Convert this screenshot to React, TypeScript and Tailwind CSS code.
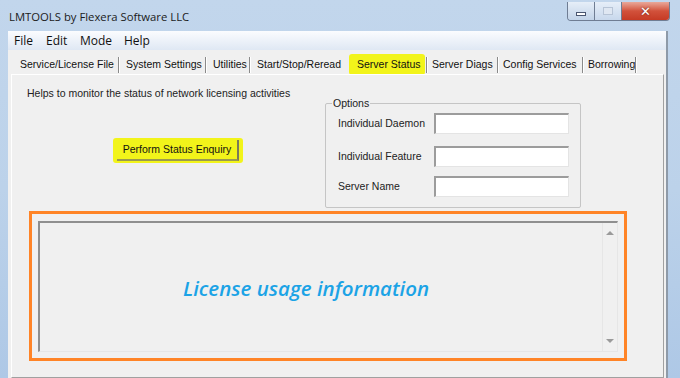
import React from 'react';

const ui = { fontFamily: '"Liberation Sans", Arial, sans-serif' };
const seg = { fontFamily: '"Open Sans", "Noto Sans", sans-serif' };

const tabs = [
  { label: 'Service/License File', w: 'w-[106px]', sep: true },
  { label: 'System Settings', w: 'w-[87px]', sep: true },
  { label: 'Utilities', w: 'w-[44px]', sep: true },
  { label: 'Start/Stop/Reread', w: 'w-[98px]', sep: false },
];
const tabsRight = [
  { label: 'Server Diags', w: 'w-[71px]' },
  { label: 'Config Services', w: 'w-[85px]' },
  { label: 'Borrowing', w: 'w-[52px]' },
];

const Sep = () => (
  <div className="ml-auto flex h-[16px] shrink-0">
    <div className="w-px bg-[#8a8a8a]" />
    <div className="w-px bg-white" />
  </div>
);

const Field = ({ label, mt }: { label: string; mt: string }) => (
  <div className={`flex items-center ${mt}`}>
    <span className="w-[108px] pl-[12px] whitespace-nowrap text-[10.5px] text-[#222]">{label}</span>
    <div className="w-[135px] h-[21px] bg-white border-t-2 border-l-2 border-t-[#9c9c9c] border-l-[#9c9c9c] border-r border-b border-r-[#e4e4e4] border-b-[#e4e4e4]" />
  </div>
);

export default function App() {
  return (
    <div className="w-[680px] h-[378px] overflow-hidden flex flex-col bg-gradient-to-b from-[#c2d6ec] via-[#bcd2ea] to-[#aec8e6]" style={ui}>
      {/* title bar */}
      <div className="h-[31px] flex items-start shrink-0">
        <span className="pl-[9px] pt-[9px] text-[11.3px] text-[#1b1b1b] whitespace-nowrap" style={seg}>LMTOOLS by Flexera Software LLC</span>
        <div className="ml-auto mr-[10px] mt-[2px] flex h-[19px] rounded-b-[4px] overflow-hidden border border-[#6f7d93] border-t-0">
          <div className="w-[27px] flex items-center justify-center bg-gradient-to-b from-[#e6eef8] to-[#c2d3e8] border-r border-[#6f7d93]">
            <div className="w-[10px] h-[4px] bg-white border border-[#4a5670] mt-[5px]" />
          </div>
          <div className="w-[27px] flex items-center justify-center bg-gradient-to-b from-[#e6eef8] to-[#c8d8ec] border-r border-[#6f7d93]">
            <div className="w-[10px] h-[8px] border border-[#b7c4d6] bg-[#dfe7f2]" />
          </div>
          <div className="w-[47px] flex items-center justify-center bg-gradient-to-b from-[#e8a89a] via-[#d2513b] to-[#c53a24]">
            <span className="text-white text-[13px] font-bold leading-none" style={{ fontFamily: '"DejaVu Sans", sans-serif', textShadow: '0 0 2px #5a1a10' }}>✕</span>
          </div>
        </div>
      </div>

      {/* client */}
      <div className="flex-1 ml-[8px] mr-[12px] bg-[#f0f0f0] border-r-2 border-[#8e9aa8] flex flex-col">
        {/* menu */}
        <div className="h-[19px] flex items-center bg-gradient-to-b from-[#fbfcfe] to-[#dfe8f4] text-[12px] text-[#111] shrink-0" style={seg}>
          <span className="w-[38px] pl-[6px]">File</span>
          <span className="w-[34px]">Edit</span>
          <span className="w-[44px]">Mode</span>
          <span>Help</span>
        </div>

        {/* tabs */}
        <div className="h-[24px] pt-[5px] flex items-center pl-[6px] text-[10.5px] text-[#111] shrink-0 whitespace-nowrap">
          {tabs.map((t) => (
            <div key={t.label} className={`${t.w} shrink-0 flex items-center pl-[6px]`}>
              <span>{t.label}</span>
              {t.sep && <Sep />}
            </div>
          ))}
          <div className="w-[79px] shrink-0 h-[22px] flex items-center">
            <div className="w-[76px] h-[21px] flex items-center pl-[8px] bg-[#f2f41a] rounded-[3px]">Server Status</div>
            <Sep />
          </div>
          {tabsRight.map((t) => (
            <div key={t.label} className={`${t.w} shrink-0 flex items-center pl-[4px]`}>
              <span>{t.label}</span>
              <Sep />
            </div>
          ))}
        </div>

        {/* panel */}
        <div className="flex-1 ml-[3px] mr-[2px] border-t border-l border-r border-b border-t-white border-l-white border-r-[#a0a0a0] border-b-[#a0a0a0] flex flex-col">
          <div className="flex h-[136px] shrink-0">
            <div className="w-[313px] pl-[15px] pt-[11px] flex flex-col">
              <span className="text-[10.5px] leading-[14px] text-[#222] whitespace-nowrap">Helps to monitor the status of network licensing activities</span>
              <div className="mt-[38px] ml-[86px] w-[130px] h-[25px] bg-[#f2f41a] rounded-[3px] flex items-center">
                <div className="ml-[4px] w-[122px] h-[21px] flex items-center justify-center border-r-2 border-b-2 border-r-[#7a7a5a] border-b-[#9a9a50] text-[10.5px] text-[#111] whitespace-nowrap">
                  Perform Status Enquiry
                </div>
              </div>
            </div>
            <div className="relative mt-[28px] w-[256px] h-[105px] border border-[#c5c5c5] rounded-[2px]">
              <span className="absolute -top-[8px] left-[6px] px-[1px] bg-[#f0f0f0] text-[10.5px] text-[#222]">Options</span>
              <Field label="Individual Daemon" mt="mt-[9px]" />
              <Field label="Individual Feature" mt="mt-[12px]" />
              <Field label="Server Name" mt="mt-[9px]" />
            </div>
          </div>

          <div className="ml-[17px] w-[598px] h-[150px] shrink-0 border-[3px] border-[#ff8427] p-[6px] pt-[7px]">
            <div className="h-full flex border-t-2 border-l-2 border-t-[#8f8f8f] border-l-[#8f8f8f] border-r border-b border-r-[#e6e6e6] border-b-[#e6e6e6]">
              <div className="flex-1 flex items-center justify-center pt-[2px] pr-[30px]">
                <span className="text-[20.5px] italic font-semibold text-[#1ba3e6] whitespace-nowrap" style={seg}>License usage information</span>
              </div>
              <div className="w-[15px] flex flex-col items-center justify-between py-[8px] border-l border-[#e6e6e6]">
                <span className="w-0 h-0 border-l-[4px] border-r-[4px] border-b-[4px] border-l-transparent border-r-transparent border-b-[#9a9a9a]" />
                <span className="w-0 h-0 border-l-[4px] border-r-[4px] border-t-[4px] border-l-transparent border-r-transparent border-t-[#9a9a9a]" />
              </div>
            </div>
          </div>
        </div>
      </div>
    </div>
  );
}
